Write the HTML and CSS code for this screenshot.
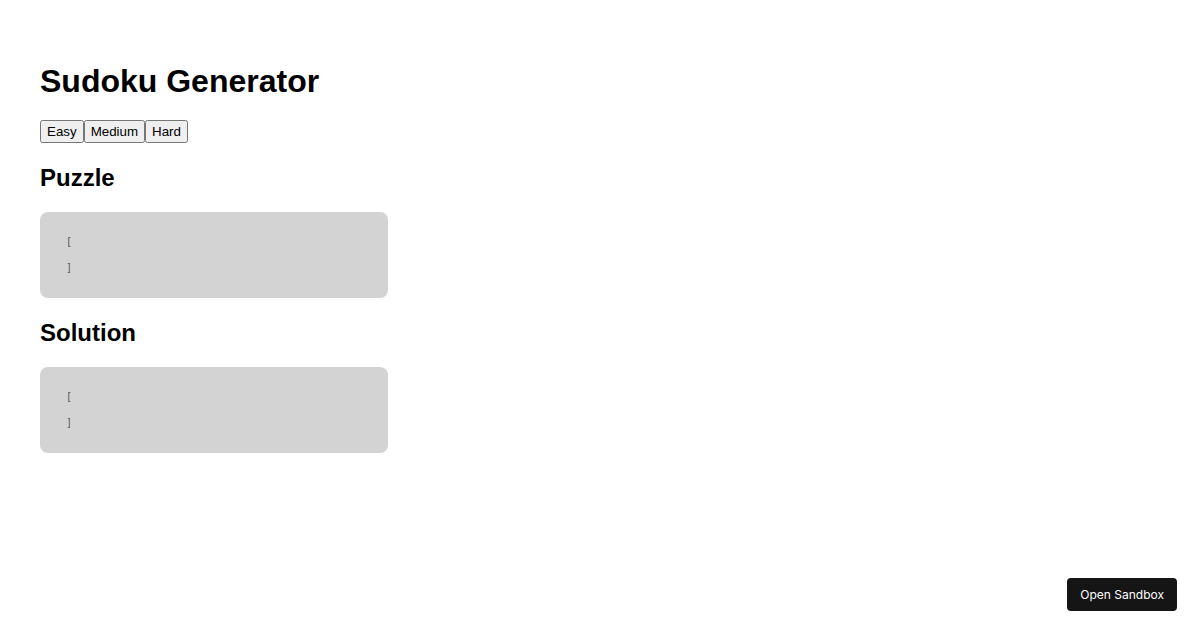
FILE: index.html
```html
<!DOCTYPE html>
<html lang="en">
<head>
    <meta charset="UTF-8">
    <meta name="viewport" content="width=device-width, initial-scale=1.0">
    <title>Sudoku Generator</title>
    <link rel="stylesheet" href="styles.css">
</head>
<body>
    <div class="app">
        <h1>Sudoku Generator</h1>
        <div class="levels"><button>Easy</button><button>Medium</button><button>Hard</button></div>

        <h2>Puzzle</h2>
        <pre class="grid">[
]</pre>

        <h2>Solution</h2>
        <pre class="grid">[
]</pre>
    </div>

    <a class="sandbox" href="#">Open Sandbox</a>
</body>
</html>
```

FILE: styles.css
```css
body {
    margin: 0;
    font-family: "Liberation Sans", Arial, sans-serif;
    background-color: #fff;
    color: #000;
}
.app {
    padding: 40px;
}
h1 {
    font-size: 32px;
    line-height: 41px;
    margin: 21px 0 18px;
}
h2 {
    font-size: 24px;
    line-height: 30px;
    margin: 20px 0 19px;
}
.levels {
    display: flex;
}
.levels button {
    font-family: "Liberation Sans", Arial, sans-serif;
    font-size: 13.33px;
    padding: 2px 5px;
}
.grid {
    box-sizing: border-box;
    width: 348px;
    margin: 0;
    padding: 17px 26px;
    background-color: #d3d3d3;
    border-radius: 8px;
    font-family: "DejaVu Sans Mono", monospace;
    font-size: 10px;
    line-height: 26px;
    color: #555;
}
.sandbox {
    position: fixed;
    right: 23px;
    bottom: 19px;
    padding: 8px 13px;
    background-color: #151515;
    color: #fff;
    border-radius: 4px;
    font-family: Inter, "Liberation Sans", sans-serif;
    font-size: 12px;
    line-height: 17px;
    text-decoration: none;
}
```
